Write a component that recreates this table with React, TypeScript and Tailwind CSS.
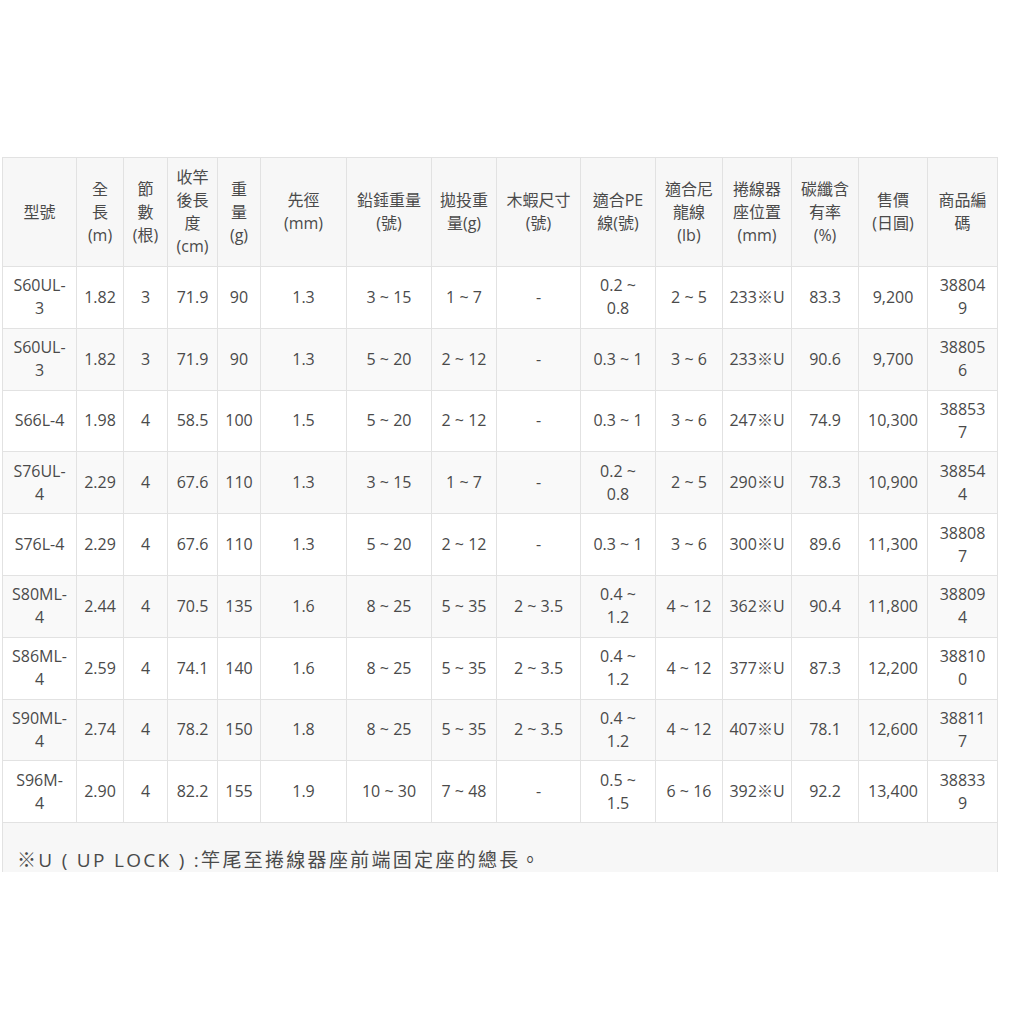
import React from "react";

const widths = [74, 47, 44, 50, 43, 86, 85, 65, 84, 75, 67, 69, 67, 69, 70];

const header: string[][] = [
  ["型號"],
  ["全", "長", "(m)"],
  ["節", "數", "(根)"],
  ["收竿", "後長", "度", "(cm)"],
  ["重", "量", "(g)"],
  ["先徑", "(mm)"],
  ["鉛錘重量", "(號)"],
  ["拋投重", "量(g)"],
  ["木蝦尺寸", "(號)"],
  ["適合PE", "線(號)"],
  ["適合尼", "龍線", "(lb)"],
  ["捲線器", "座位置", "(mm)"],
  ["碳纖含", "有率", "(%)"],
  ["售價", "(日圓)"],
  ["商品編", "碼"],
];

const rows: string[][][] = [
  [["S60UL-", "3"], ["1.82"], ["3"], ["71.9"], ["90"], ["1.3"], ["3 ~ 15"], ["1 ~ 7"], ["-"], ["0.2 ~", "0.8"], ["2 ~ 5"], ["233※U"], ["83.3"], ["9,200"], ["38804", "9"]],
  [["S60UL-", "3"], ["1.82"], ["3"], ["71.9"], ["90"], ["1.3"], ["5 ~ 20"], ["2 ~ 12"], ["-"], ["0.3 ~ 1"], ["3 ~ 6"], ["233※U"], ["90.6"], ["9,700"], ["38805", "6"]],
  [["S66L-4"], ["1.98"], ["4"], ["58.5"], ["100"], ["1.5"], ["5 ~ 20"], ["2 ~ 12"], ["-"], ["0.3 ~ 1"], ["3 ~ 6"], ["247※U"], ["74.9"], ["10,300"], ["38853", "7"]],
  [["S76UL-", "4"], ["2.29"], ["4"], ["67.6"], ["110"], ["1.3"], ["3 ~ 15"], ["1 ~ 7"], ["-"], ["0.2 ~", "0.8"], ["2 ~ 5"], ["290※U"], ["78.3"], ["10,900"], ["38854", "4"]],
  [["S76L-4"], ["2.29"], ["4"], ["67.6"], ["110"], ["1.3"], ["5 ~ 20"], ["2 ~ 12"], ["-"], ["0.3 ~ 1"], ["3 ~ 6"], ["300※U"], ["89.6"], ["11,300"], ["38808", "7"]],
  [["S80ML-", "4"], ["2.44"], ["4"], ["70.5"], ["135"], ["1.6"], ["8 ~ 25"], ["5 ~ 35"], ["2 ~ 3.5"], ["0.4 ~", "1.2"], ["4 ~ 12"], ["362※U"], ["90.4"], ["11,800"], ["38809", "4"]],
  [["S86ML-", "4"], ["2.59"], ["4"], ["74.1"], ["140"], ["1.6"], ["8 ~ 25"], ["5 ~ 35"], ["2 ~ 3.5"], ["0.4 ~", "1.2"], ["4 ~ 12"], ["377※U"], ["87.3"], ["12,200"], ["38810", "0"]],
  [["S90ML-", "4"], ["2.74"], ["4"], ["78.2"], ["150"], ["1.8"], ["8 ~ 25"], ["5 ~ 35"], ["2 ~ 3.5"], ["0.4 ~", "1.2"], ["4 ~ 12"], ["407※U"], ["78.1"], ["12,600"], ["38811", "7"]],
  [["S96M-", "4"], ["2.90"], ["4"], ["82.2"], ["155"], ["1.9"], ["10 ~ 30"], ["7 ~ 48"], ["-"], ["0.5 ~", "1.5"], ["6 ~ 16"], ["392※U"], ["92.2"], ["13,400"], ["38833", "9"]],
];

function Lines({ lines }: { lines: string[] }) {
  return (
    <>
      {lines.map((l, i) => (
        <React.Fragment key={i}>
          {i > 0 && <br />}
          {l}
        </React.Fragment>
      ))}
    </>
  );
}

export default function App() {
  return (
    <div className="w-[1024px] h-[1024px] bg-white pt-[157px] pl-[2px] font-['Open_Sans','Noto_Sans_CJK_TC',sans-serif] text-[#4a4a4a]">
      <div className="w-[996px] h-[715px] overflow-hidden">
        <table className="w-[996px] table-fixed border-collapse text-[16px] leading-[23px]">
          <colgroup>
            {widths.map((w, i) => (
              <col key={i} style={{ width: w }} />
            ))}
          </colgroup>
          <thead>
            <tr className="bg-[#f7f7f7]">
              {header.map((h, i) => (
                <th
                  key={i}
                  className="border border-[#e2e2e2] py-[8px] px-0 text-center align-middle font-normal whitespace-nowrap"
                >
                  <Lines lines={h} />
                </th>
              ))}
            </tr>
          </thead>
          <tbody>
            {rows.map((r, ri) => (
              <tr key={ri} className={ri % 2 === 1 ? "h-[61.8px] bg-[#f9f9f9]" : "h-[61.8px] bg-white"}>
                {r.map((c, ci) => (
                  <td
                    key={ci}
                    className="border border-[#e2e2e2] py-0 px-0 text-center align-middle whitespace-nowrap"
                  >
                    <Lines lines={c} />
                  </td>
                ))}
              </tr>
            ))}
            <tr className="bg-[#f7f7f7]">
              <td
                colSpan={15}
                className="border border-[#e2e2e2] pt-[24px] pb-[20px] pl-[14px] text-left text-[19px] leading-[26px] tracking-[2.3px] whitespace-nowrap"
              >
                ※U ( UP LOCK ) :竿尾至捲線器座前端固定座的總長。
              </td>
            </tr>
          </tbody>
        </table>
      </div>
    </div>
  );
}
